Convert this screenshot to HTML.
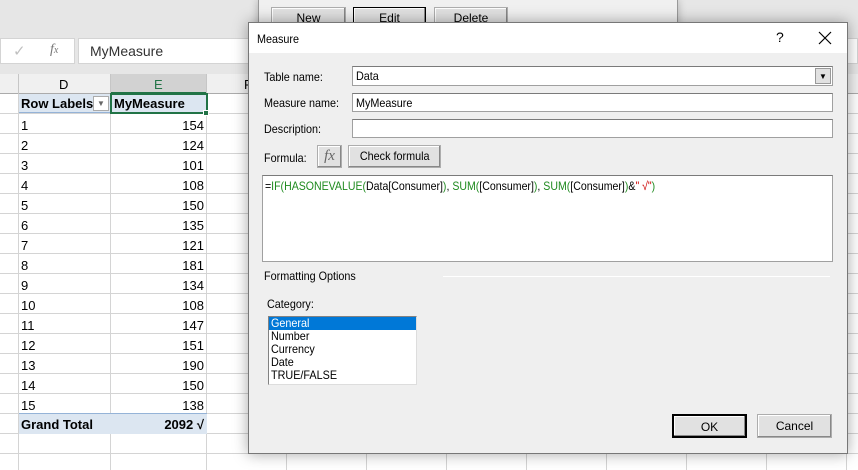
<!DOCTYPE html>
<html><head><style>
*{margin:0;padding:0;box-sizing:border-box}
body{width:858px;height:470px;overflow:hidden;background:#fff;position:relative;font-family:"Liberation Sans",sans-serif}
.a{position:absolute}
.cal{font-family:"Liberation Sans",sans-serif;font-size:13px;color:#000}
.hl{position:absolute;left:0;width:858px;height:1px;background:#d4d4d4}
.vl{position:absolute;top:94px;width:1px;height:376px;background:#d4d4d4}
.dlg{font-size:12px;color:#000}
.in{position:absolute;background:#fff;border:1px solid #a0a0a0;border-top-color:#7a7a7a;font-size:12px;padding:2px 3px;line-height:14px}
.btn{position:absolute;background:#e1e1e1;border:1px solid #adadad;text-align:center;font-size:12px;box-shadow:inset -1px -1px #888,inset 1px 1px #fff}
.n{display:inline-block;transform:scaleX(.9);transform-origin:0 0;white-space:nowrap}
</style></head><body>
<div class="a" style="left:0;top:0;width:858px;height:74px;background:#e6e6e6"></div>
<div class="a" style="left:0;top:38px;width:75px;height:26px;background:#fff;border:1px solid #d4d4d4"></div>
<div class="a" style="left:13px;top:42px;color:#c0c0c0;font-size:15px">✓</div>
<div class="a" style="left:50px;top:42px;color:#777;font-family:'Liberation Serif',serif;font-style:italic;font-size:14px">f<span style="font-size:10px">x</span></div>
<div class="a" style="left:78px;top:38px;width:780px;height:26px;background:#fff;border:1px solid #d4d4d4"></div>
<div class="a cal" style="left:90px;top:43px;font-size:14px;color:#333">MyMeasure</div>
<div class="a" style="left:0;top:74px;width:858px;height:20px;background:#f0f0f0;border-bottom:1px solid #ababab"></div>
<div class="a" style="left:110px;top:74px;width:97px;height:20px;background:#d2d2d2;border-bottom:2px solid #217346"></div>
<div class="a" style="left:18px;top:74px;width:1px;height:20px;background:#c6c6c6"></div>
<div class="a" style="left:110px;top:74px;width:1px;height:20px;background:#c6c6c6"></div>
<div class="a" style="left:206px;top:74px;width:1px;height:20px;background:#c6c6c6"></div>
<div class="a cal" style="left:59px;top:77px">D</div>
<div class="a cal" style="left:154px;top:77px;color:#217346">E</div>
<div class="a cal" style="left:244px;top:77px">F</div>
<div class="vl" style="left:18px"></div><div class="vl" style="left:110px"></div><div class="vl" style="left:206px"></div><div class="vl" style="left:286px"></div><div class="vl" style="left:366px"></div><div class="vl" style="left:446px"></div><div class="vl" style="left:526px"></div><div class="vl" style="left:606px"></div><div class="vl" style="left:686px"></div><div class="vl" style="left:766px"></div><div class="vl" style="left:846px"></div>
<div class="hl" style="top:113px"></div><div class="hl" style="top:133px"></div><div class="hl" style="top:153px"></div><div class="hl" style="top:173px"></div><div class="hl" style="top:193px"></div><div class="hl" style="top:213px"></div><div class="hl" style="top:233px"></div><div class="hl" style="top:253px"></div><div class="hl" style="top:273px"></div><div class="hl" style="top:293px"></div><div class="hl" style="top:313px"></div><div class="hl" style="top:333px"></div><div class="hl" style="top:353px"></div><div class="hl" style="top:373px"></div><div class="hl" style="top:393px"></div><div class="hl" style="top:413px"></div><div class="hl" style="top:433px"></div><div class="hl" style="top:453px"></div>
<div class="a" style="left:19px;top:94px;width:188px;height:19px;background:#dce6f1;border-bottom:1px solid #95b3d7"></div>
<div class="a cal" style="left:21px;top:96px;font-weight:bold">Row Labels</div>
<div class="a" style="left:93px;top:96px;width:16px;height:15px;background:#fff;border:1px solid #ababab;font-size:8px;color:#666;text-align:center;line-height:13px">▼</div>
<div class="a" style="left:110px;top:93px;width:98px;height:21px;border:2px solid #217346"></div>
<div class="a" style="left:203px;top:110px;width:6px;height:6px;background:#217346;border:1px solid #fff"></div>
<div class="a cal" style="left:114px;top:96px;font-weight:bold">MyMeasure</div>
<div class="a cal" style="left:21px;top:116px;line-height:20px">1<br>2<br>3<br>4<br>5<br>6<br>7<br>8<br>9<br>10<br>11<br>12<br>13<br>14<br>15</div>
<div class="a cal" style="left:150px;width:54px;text-align:right;top:116px;line-height:20px">154<br>124<br>101<br>108<br>150<br>135<br>121<br>181<br>134<br>108<br>147<br>151<br>190<br>150<br>138</div>
<div class="a" style="left:19px;top:413px;width:188px;height:21px;background:#dce6f1;border-top:1px solid #95b3d7"></div>
<div class="a cal" style="left:21px;top:417px;font-weight:bold">Grand Total</div>
<div class="a cal" style="left:140px;width:64px;text-align:right;top:417px;font-weight:bold">2092 √</div>
<div class="a" style="left:258px;top:0;width:420px;height:30px;background:#f0f0f0;border:1px solid #999;border-top:none;box-shadow:0 0 8px rgba(0,0,0,.25)"></div>
<div class="btn" style="left:271px;top:7px;width:75px;height:22px;line-height:20px">New</div>
<div class="btn" style="left:353px;top:7px;width:73px;height:22px;line-height:20px;border:1px solid #000">Edit</div>
<div class="btn" style="left:434px;top:7px;width:74px;height:22px;line-height:20px">Delete</div>
<div class="a dlg" style="left:248px;top:22px;width:600px;height:432px;background:#efefef;border:1px solid #777;box-shadow:0 0 14px rgba(0,0,0,.35)">
 <div class="a" style="left:0;top:0;width:598px;height:30px;background:#fff"></div>
 <div class="a" style="left:8px;top:9px;font-size:12px"><span class="n">Measure</span></div>
 <div class="a" style="left:527px;top:6px;font-size:14px">?</div>
 <svg class="a" style="left:569px;top:8px" width="14" height="14"><path d="M1 1L13 13M13 1L1 13" stroke="#000" stroke-width="1.2"/></svg>
 <div class="a" style="left:15px;top:47px"><span class="n">Table name:</span></div>
 <div class="a" style="left:15px;top:73px"><span class="n">Measure name:</span></div>
 <div class="a" style="left:15px;top:99px"><span class="n">Description:</span></div>
 <div class="a" style="left:15px;top:128px"><span class="n">Formula:</span></div>
</div>
<div class="in" style="left:352px;top:66px;width:481px;height:20px"><span class="n">Data</span></div>
<div class="a" style="left:815px;top:68px;width:16px;height:16px;background:#e1e1e1;border:1px solid #999;font-size:8px;text-align:center;line-height:15px">▼</div>
<div class="in" style="left:352px;top:93px;width:481px;height:19px"><span class="n">MyMeasure</span></div>
<div class="in" style="left:352px;top:119px;width:481px;height:19px"></div>
<div class="btn" style="left:317px;top:145px;width:25px;height:23px;font-family:'Liberation Serif',serif;font-style:italic;font-size:15px;color:#666;line-height:20px">fx</div>
<div class="btn" style="left:348px;top:145px;width:93px;height:23px;line-height:21px"><span class="n" style="transform-origin:50% 0">Check formula</span></div>
<div class="in" style="left:262px;top:175px;width:571px;height:87px;padding:3px 2px;font-size:12px"><span class="n" style="transform:scaleX(.88)">=<span style="color:#1e8a1e">IF(HASONEVALUE(</span>Data[Consumer]<span style="color:#1e8a1e">)</span>, <span style="color:#1e8a1e">SUM(</span>[Consumer]<span style="color:#1e8a1e">)</span>, <span style="color:#1e8a1e">SUM(</span>[Consumer]<span style="color:#1e8a1e">)</span>&amp;<span style="color:#c00">" √"</span><span style="color:#1e8a1e">)</span></span></div>
<div class="a dlg" style="left:264px;top:269px"><span class="n">Formatting Options</span></div>
<div class="a" style="left:443px;top:276px;width:387px;height:1px;background:#a0a0a0;border-bottom:1px solid #fff"></div>
<div class="a dlg" style="left:267px;top:297px"><span class="n">Category:</span></div>
<div class="a" style="left:268px;top:316px;width:149px;height:69px;background:#fff;border:1px solid #828282;border-right-color:#ddd;border-bottom-color:#ddd;font-size:12px;line-height:13px">
 <div style="background:#0078d7;color:#fff;padding-left:2px"><span class="n">General</span></div>
 <div style="padding-left:2px"><span class="n">Number<br>Currency<br>Date<br>TRUE/FALSE</span></div>
</div>
<div class="btn" style="left:672px;top:414px;width:75px;height:24px;line-height:22px;border:2px solid #000">OK</div>
<div class="btn" style="left:757px;top:414px;width:75px;height:24px;line-height:22px">Cancel</div>
</body></html>
